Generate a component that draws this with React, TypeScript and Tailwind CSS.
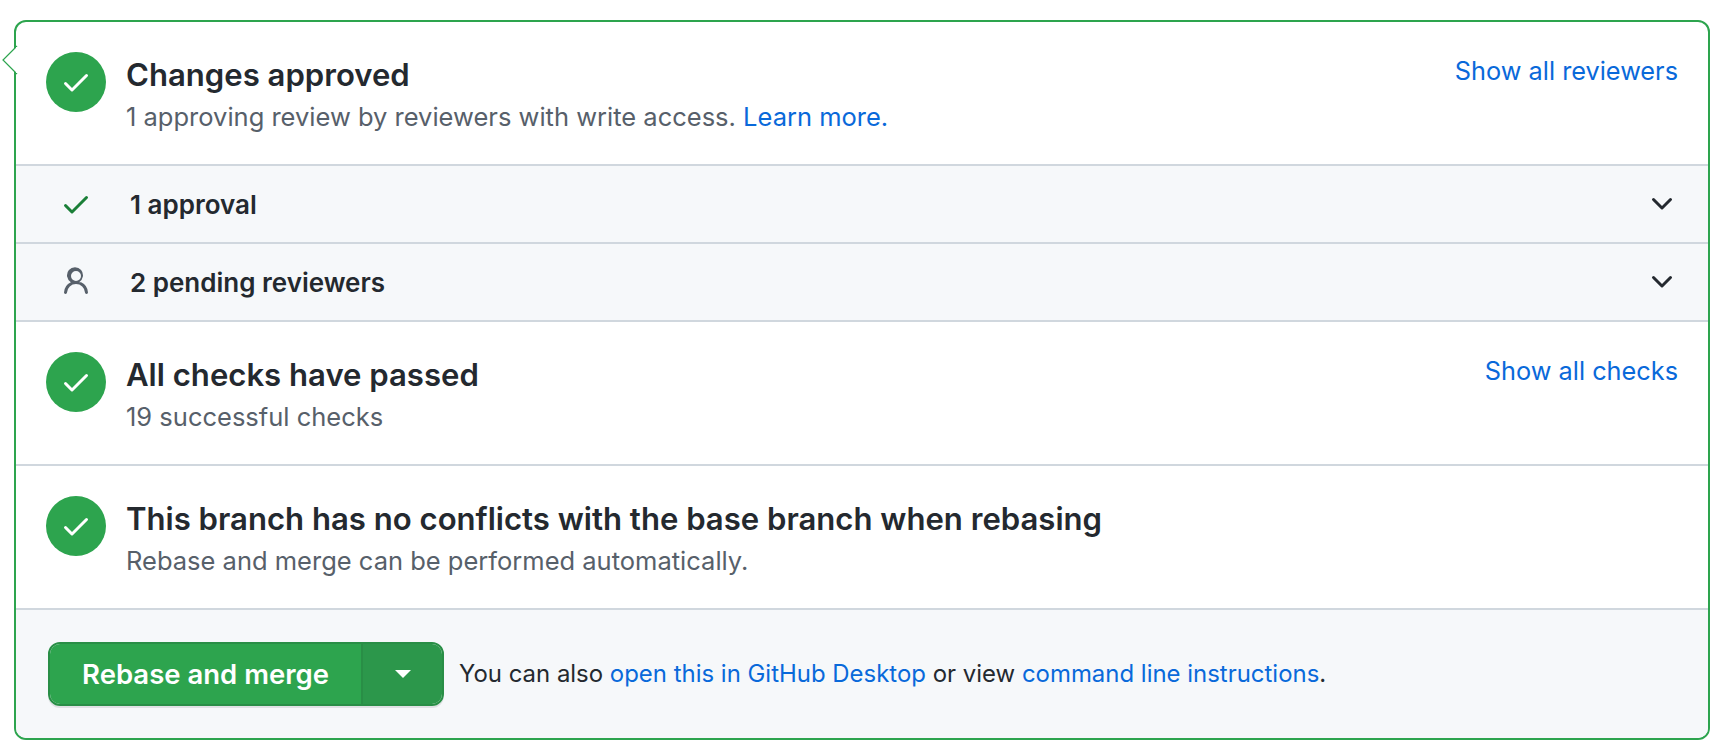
const font = { fontFamily: 'Inter, "Noto Sans", sans-serif' };

const CHECK = 'M13.78 4.22a.75.75 0 0 1 0 1.06l-7.25 7.25a.75.75 0 0 1-1.06 0L2.22 9.28a.751.751 0 0 1 .018-1.042.751.751 0 0 1 1.042-.018L6 10.94l6.72-6.72a.75.75 0 0 1 1.06 0Z';
const PERSON = 'M10.561 8.073a6.005 6.005 0 0 1 3.432 5.142.75.75 0 1 1-1.498.07 4.5 4.5 0 0 0-8.99 0 .75.75 0 0 1-1.498-.07 6.004 6.004 0 0 1 3.431-5.142 3.999 3.999 0 1 1 4.123 0ZM10.5 5a2.5 2.5 0 1 0-5 0 2.5 2.5 0 0 0 5 0Z';
const CHEVRON = 'M12.78 5.22a.749.749 0 0 1 0 1.06l-4.25 4.25a.749.749 0 0 1-1.06 0L3.22 6.28a.749.749 0 1 1 1.06-1.06L8 8.939l3.72-3.719a.749.749 0 0 1 1.06 0Z';

function Octicon({ d, className }: { d: string; className: string }) {
  return (
    <svg viewBox="0 0 16 16" fill="currentColor" className={className}>
      <path d={d} />
    </svg>
  );
}

function StatusCircle() {
  return (
    <div className="flex w-[60px] h-[60px] shrink-0 items-center justify-center rounded-full bg-[#2da44e] text-white">
      <Octicon d={CHECK} className="w-8 h-8" />
    </div>
  );
}

function Section({ title, sub, action }: { title: string; sub: React.ReactNode; action?: string }) {
  return (
    <div className="flex h-[144px] border-b-2 border-[#d0d7de] pl-[30px] pr-[30px] pt-[30px]">
      <StatusCircle />
      <div className="ml-[20px] flex-1">
        <h3 className="mt-[4px] text-[31.1px] leading-[38px] font-semibold text-[#24292f]">{title}</h3>
        <p className="mt-[5px] text-[25.5px] leading-[36px] text-[#57606a]">{sub}</p>
      </div>
      {action && <a className="mt-[1px] text-[25.3px] leading-[36px] text-[#0969da]">{action}</a>}
    </div>
  );
}

function ReviewRow({ icon, iconColor, label }: { icon: string; iconColor: string; label: string }) {
  return (
    <div className="flex h-[78px] items-center border-b-2 border-[#d0d7de] bg-[#f6f8fa] pl-[44px] pr-[30px]">
      <Octicon d={icon} className={`w-8 h-8 ${iconColor}`} />
      <span className="ml-[38px] flex-1 text-[26px] font-semibold text-[#24292f]">{label}</span>
      <Octicon d={CHEVRON} className="w-8 h-8 text-[#24292f]" />
    </div>
  );
}

export default function App() {
  return (
    <div className="min-h-screen bg-white pl-[14px] pr-[6px] pt-[20px]" style={font}>
      <div className="relative h-[720px] rounded-[12px] border-2 border-[#2da44e] bg-white">
        {/* Pointer */}
        <svg className="absolute -left-[14px] top-[23px]" width="16" height="30" viewBox="0 0 16 30">
          <path d="M15 1 L1 15 L15 29" fill="#ffffff" stroke="#2da44e" strokeWidth="1.2" />
          <rect x="14" y="2" width="2" height="26" fill="#ffffff" />
        </svg>

        <Section
          title="Changes approved"
          sub={<>1 approving review by reviewers with write access. <a className="text-[#0969da]">Learn more.</a></>}
          action="Show all reviewers"
        />
        <ReviewRow icon={CHECK} iconColor="text-[#1a7f37]" label="1 approval" />
        <ReviewRow icon={PERSON} iconColor="text-[#57606a]" label="2 pending reviewers" />
        <Section title="All checks have passed" sub="19 successful checks" action="Show all checks" />
        <Section
          title="This branch has no conflicts with the base branch when rebasing"
          sub="Rebase and merge can be performed automatically."
        />

        <div className="flex h-[128px] items-center rounded-b-[10px] bg-[#f6f8fa] pl-[32px]">
          <div className="flex h-[64px] overflow-hidden rounded-[12px] border-2 border-[#298e46] shadow-[0_2px_0_rgba(27,31,36,0.1)]">
            <button className="w-[311px] bg-[#2da44e] pt-[2px] text-center text-[27.5px] font-semibold text-white">Rebase and merge</button>
            <button className="flex w-[81px] items-center justify-center border-l-2 border-[#298e46] bg-[#2c974b]">
              <span className="border-x-[8px] border-t-[8px] border-x-transparent border-t-white" />
            </button>
          </div>
          <p className="ml-[15px] text-[23.95px] text-[#24292f]">
            You can also <a className="text-[#0969da]">open this in GitHub Desktop</a> or view{' '}
            <a className="text-[#0969da]">command line instructions</a>.
          </p>
        </div>
      </div>
    </div>
  );
}
